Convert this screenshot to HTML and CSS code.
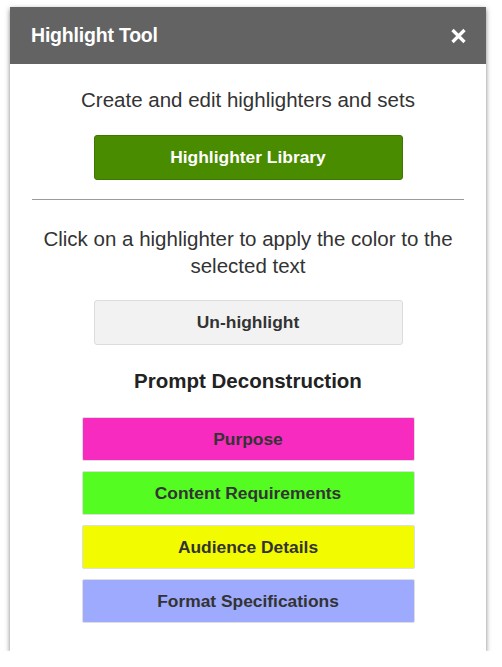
FILE: index.html
```html
<!DOCTYPE html>
<html>
<head>
<meta charset="utf-8">
<link rel="stylesheet" href="styles.css">
</head>
<body>
<div class="panel">
  <div class="header">
    <span class="title">Highlight Tool</span>
    <svg class="close" width="17" height="16" viewBox="0 0 17 16"><path d="M2.5 2 L14.5 14 M14.5 2 L2.5 14" stroke="#fff" stroke-width="3.2" stroke-linecap="butt"/></svg>
  </div>
  <div class="body">
    <p class="intro">Create and edit highlighters and sets</p>
    <button class="btn lib">Highlighter Library</button>
    <hr class="divider">
    <p class="desc">Click on a highlighter to apply the color to the selected text</p>
    <button class="btn unhl">Un-highlight</button>
    <h2 class="set">Prompt Deconstruction</h2>
    <div class="list">
      <button class="hl pink">Purpose</button>
      <button class="hl green">Content Requirements</button>
      <button class="hl yellow">Audience Details</button>
      <button class="hl blue">Format Specifications</button>
    </div>
  </div>
</div>
</body>
</html>
```
FILE: styles.css
```css
* { box-sizing: border-box; }
html, body { margin: 0; padding: 0; background: #fff; }
body {
  font-family: "Liberation Sans", Arial, sans-serif;
  padding: 7px 16px 0 10px;
}
.panel {
  width: 476px;
  height: 644px;
  background: #fff;
  box-shadow: 0 2px 5px rgba(0,0,0,0.5);
}
.header {
  height: 57px;
  background: #636363;
  display: flex;
  align-items: center;
  justify-content: space-between;
  padding: 0 19px 0 21px;
}
.title {
  color: #fff;
  font-weight: bold;
  font-size: 19.5px;
  letter-spacing: -0.2px;
}
.close { display: block; margin-top: 1px; }
.body {
  padding: 0 23px;
  display: flex;
  flex-direction: column;
  align-items: center;
}
.intro {
  margin: 24px 0 0;
  font-size: 20.5px;
  line-height: 24px;
  color: #333;
  text-align: center;
}
.btn {
  font-family: inherit;
  font-weight: bold;
  font-size: 17.4px;
  width: 309px;
  height: 45px;
  border-radius: 3px;
  cursor: pointer;
}
.lib {
  margin-top: 23px;
  background: #4a8c00;
  border: 1px solid #3e7700;
  color: #fff;
}
.divider {
  width: 432px;
  margin: 19px 0 0;
  border: 0;
  border-top: 1px solid #9b9b9b;
  height: 0;
}
.desc {
  margin: 25px 0 0;
  font-size: 20.5px;
  line-height: 27px;
  color: #333;
  text-align: center;
}
.unhl {
  margin-top: 21px;
  height: 45px;
  background: #f2f2f2;
  border: 1px solid #dcdcdc;
  color: #333;
}
.set {
  margin: 25px 0 0;
  font-size: 20.5px;
  line-height: 22px;
  font-weight: bold;
  color: #222;
}
.list {
  margin-top: 25px;
  display: flex;
  flex-direction: column;
  gap: 10px;
}
.hl {
  width: 333px;
  height: 44px;
  border: 1px solid #dedede;
  border-radius: 2px;
  font-family: inherit;
  font-weight: bold;
  font-size: 17.4px;
  color: #333;
  cursor: pointer;
}
.pink { background: #f72bc0; }
.green { background: #55fc22; }
.yellow { background: #f2fb00; }
.blue { background: #9eaafd; }
```
